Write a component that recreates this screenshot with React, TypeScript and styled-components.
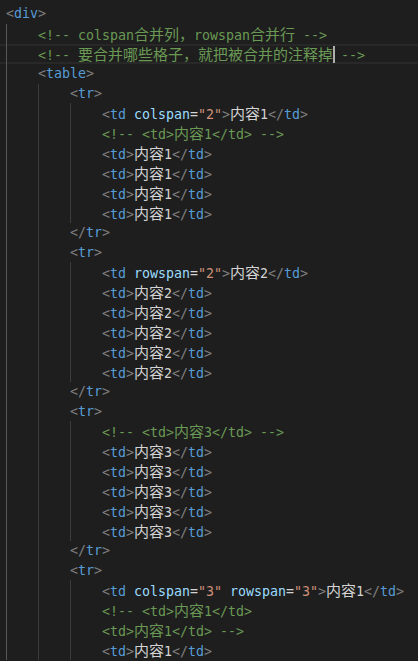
import React from 'react';
import styled, { createGlobalStyle, css } from 'styled-components';

const GlobalStyle = createGlobalStyle`
  html, body { margin: 0; padding: 0; background: #1e1e1e; }
  body { width: 418px; height: 661px; overflow: hidden; }
`;

type Kind = 'bracket' | 'tag' | 'attr' | 'plain' | 'string' | 'comment';

const colors: Record<Kind, string> = {
  bracket: '#808080',
  tag: '#569cd6',
  attr: '#9cdcfe',
  plain: '#d4d4d4',
  string: '#ce9178',
  comment: '#6a9955',
};

const Editor = styled.div`
  background: #1e1e1e;
  height: 661px;
  box-sizing: border-box;
  padding-top: 4px;
  overflow: hidden;
  font-family: "DejaVu Sans Mono", "Liberation Mono", "Noto Sans CJK SC", monospace;
  font-size: 13.29px;
  color: #d4d4d4;
`;

const Line = styled.div<{ $current?: boolean }>`
  display: flex;
  align-items: stretch;
  height: 19.875px;
  line-height: 19.875px;
  padding-left: 6px;
  white-space: pre;
  box-sizing: border-box;
  ${(p) =>
    p.$current &&
    css`
      box-shadow: inset 0 2px #282828, inset 0 -2px #282828;
    `}
`;

const Guide = styled.span<{ $active?: boolean }>`
  flex: 0 0 32px;
  box-sizing: border-box;
  border-left: 1px solid ${(p) => (p.$active ? '#575757' : '#3c3c3c')};
`;

const Code = styled.span`
  flex: 0 0 auto;
`;

const Tok = styled.span<{ $kind: Kind }>`
  color: ${(p) => colors[p.$kind]};
`;

const Cjk = styled.span`
  font-family: "Noto Sans CJK SC", "Noto Sans CJK JP", sans-serif;
  font-size: 15px;
`;

const Cursor = styled.span`
  display: inline-block;
  width: 2px;
  height: 17px;
  margin-right: -2px;
  vertical-align: -3px;
  background: #aeafad;
`;

function renderText(text: string) {
  const parts = text.split(/([\u3000-\u9fff\uff00-\uffef]+)/);
  return parts.map((p, i) => (i % 2 === 1 ? <Cjk key={i}>{p}</Cjk> : p));
}

function tokenize(src: string): [Kind, string][] {
  const out: [Kind, string][] = [];
  let i = 0;
  while (i < src.length) {
    if (src[i] === '<') {
      let j = i + 1;
      if (src[j] === '/') j++;
      out.push(['bracket', src.slice(i, j)]);
      let k = j;
      while (k < src.length && /[a-z]/.test(src[k])) k++;
      out.push(['tag', src.slice(j, k)]);
      i = k;
      while (i < src.length && src[i] !== '>') {
        const c = src[i];
        if (c === ' ' || c === '=') {
          out.push(['plain', c]);
          i++;
          continue;
        }
        if (c === '"') {
          const e = src.indexOf('"', i + 1);
          out.push(['string', src.slice(i, e + 1)]);
          i = e + 1;
          continue;
        }
        let k2 = i;
        while (k2 < src.length && /[a-z-]/.test(src[k2])) k2++;
        if (k2 === i) k2 = i + 1;
        out.push(['attr', src.slice(i, k2)]);
        i = k2;
      }
      if (src[i] === '>') {
        out.push(['bracket', '>']);
        i++;
      }
    } else {
      let e = src.indexOf('<', i);
      if (e < 0) e = src.length;
      out.push(['plain', src.slice(i, e)]);
      i = e;
    }
  }
  return out;
}

type LineData = { indent: number; text: string; comment?: boolean; cursor?: number };

const td = (n: string) => `<td>内容${n}</td>`;

const lines: LineData[] = [
  { indent: 0, text: '<div>' },
  { indent: 1, text: '<!-- colspan合并列，rowspan合并行 -->', comment: true },
  { indent: 1, text: '<!-- 要合并哪些格子，就把被合并的注释掉 -->', comment: true, cursor: 22 },
  { indent: 1, text: '<table>' },
  { indent: 2, text: '<tr>' },
  { indent: 3, text: '<td colspan="2">内容1</td>' },
  { indent: 3, text: '<!-- <td>内容1</td> -->', comment: true },
  { indent: 3, text: td('1') },
  { indent: 3, text: td('1') },
  { indent: 3, text: td('1') },
  { indent: 3, text: td('1') },
  { indent: 2, text: '</tr>' },
  { indent: 2, text: '<tr>' },
  { indent: 3, text: '<td rowspan="2">内容2</td>' },
  { indent: 3, text: td('2') },
  { indent: 3, text: td('2') },
  { indent: 3, text: td('2') },
  { indent: 3, text: td('2') },
  { indent: 3, text: td('2') },
  { indent: 2, text: '</tr>' },
  { indent: 2, text: '<tr>' },
  { indent: 3, text: '<!-- <td>内容3</td> -->', comment: true },
  { indent: 3, text: td('3') },
  { indent: 3, text: td('3') },
  { indent: 3, text: td('3') },
  { indent: 3, text: td('3') },
  { indent: 3, text: td('3') },
  { indent: 2, text: '</tr>' },
  { indent: 2, text: '<tr>' },
  { indent: 3, text: '<td colspan="3" rowspan="3">内容1</td>' },
  { indent: 3, text: '<!-- <td>内容1</td>', comment: true },
  { indent: 3, text: '<td>内容1</td> -->', comment: true },
  { indent: 3, text: td('1') },
];

function CodeLine({ line }: { line: LineData }) {
  const guides = Array.from({ length: line.indent }, (_, i) => (
    <Guide key={i} $active={i === 0} />
  ));
  let body: React.ReactNode;
  if (line.comment) {
    if (line.cursor !== undefined) {
      body = (
        <Tok $kind="comment">
          {renderText(line.text.slice(0, line.cursor))}
          <Cursor />
          {renderText(line.text.slice(line.cursor))}
        </Tok>
      );
    } else {
      body = <Tok $kind="comment">{renderText(line.text)}</Tok>;
    }
  } else {
    body = tokenize(line.text).map(([k, s], i) => (
      <Tok key={i} $kind={k}>
        {renderText(s)}
      </Tok>
    ));
  }
  return (
    <Line $current={line.cursor !== undefined}>
      {guides}
      <Code>{body}</Code>
    </Line>
  );
}

export default function App() {
  return (
    <>
      <GlobalStyle />
      <Editor>
        {lines.map((l, i) => (
          <CodeLine key={i} line={l} />
        ))}
      </Editor>
    </>
  );
}
